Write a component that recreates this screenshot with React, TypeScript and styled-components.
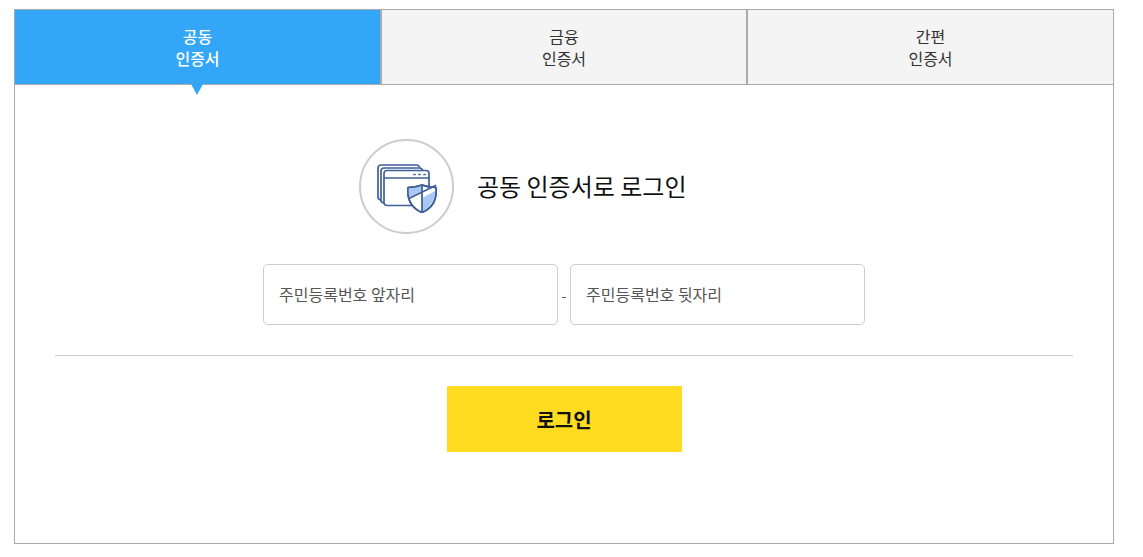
import React from "react";
import styled, { createGlobalStyle } from "styled-components";

const Global = createGlobalStyle`
  html, body { margin: 0; padding: 0; background: #fff; }
  body { font-family: "Noto Sans CJK KR", "Noto Sans", sans-serif; }
  * { box-sizing: border-box; }
`;

const Page = styled.div`
  padding: 9px 0 0 14px;
  width: 1143px;
  height: 557px;
`;

const Frame = styled.div`
  width: 1100px;
  height: 535px;
  border: 1px solid #aaa;
  display: flex;
  flex-direction: column;
`;

const Tabs = styled.div`
  display: grid;
  grid-template-columns: 367px 366px 365px;
  height: 75px;
  border-bottom: 1px solid #aaa;
`;

const Tab = styled.div<{ $active?: boolean; $last?: boolean }>`
  position: relative;
  display: flex;
  align-items: center;
  justify-content: center;
  text-align: center;
  font-size: 16px;
  line-height: 22px;
  font-weight: ${(p) => (p.$active ? 500 : 400)};
  color: ${(p) => (p.$active ? "#fff" : "#333")};
  background: ${(p) => (p.$active ? "#33a6f8" : "#f4f4f4")};
  border-right: ${(p) => (p.$last ? "0" : "2px solid #aaa")};
  ${(p) =>
    p.$active &&
    `&::after {
      content: "";
      position: absolute;
      left: 176px;
      top: 74px;
      border-left: 6px solid transparent;
      border-right: 6px solid transparent;
      border-top: 11px solid #33a6f8;
    }`}
`;

const Body = styled.div`
  padding: 54px 40px 0;
  display: flex;
  flex-direction: column;
  align-items: center;
`;

const Heading = styled.div`
  display: flex;
  align-items: center;
  gap: 23px;
  width: 410px;
  height: 95px;
`;

const IconCircle = styled.div`
  flex: none;
  width: 95px;
  height: 95px;
  border-radius: 50%;
  border: 2px solid #ccc;
  display: flex;
  align-items: center;
  justify-content: center;
  padding: 4px 0 0 2px;
`;

const Title = styled.h2`
  margin: 0;
  font-size: 24px;
  font-weight: 400;
  color: #111;
  position: relative;
  top: -1px;
`;

const Fields = styled.div`
  display: flex;
  align-items: center;
  margin-top: 30px;
`;

const Field = styled.div`
  width: 295px;
  height: 61px;
  border: 1px solid #ccc;
  border-radius: 5px;
  padding: 0 15px 1px;
  display: flex;
  align-items: center;
  font-size: 16px;
  color: #555;
`;

const Dash = styled.span`
  width: 12px;
  text-align: center;
  font-size: 14px;
  color: #555;
`;

const Divider = styled.div`
  width: 100%;
  margin-top: 30px;
  border-top: 1px solid #ccc;
`;

const Login = styled.button`
  margin-top: 30px;
  width: 235px;
  height: 66px;
  border: 0;
  background: #ffdc1f;
  color: #111;
  font-family: inherit;
  font-size: 20px;
  font-weight: 700;
`;

const CertIcon = () => (
  <svg width="62" height="49" viewBox="0 0 62 49" fill="none" stroke="#3f5f96" strokeWidth="1.7" strokeLinejoin="round" strokeLinecap="round">
    <path d="M3.500 36C1.500 35.500 1 34.500 1 33V4a3 3 0 0 1 3-3h36a3 3 0 0 1 2.500 2" />
    <path d="M6.500 39C4.500 38.500 4 37.500 4 36V7a3 3 0 0 1 3-3h36a3 3 0 0 1 2.500 2" />
    <rect x="7" y="6.500" width="45" height="35" rx="3" fill="#fff" />
    <path d="M7 14h45" />
    <path d="M37 10.500h1M42 10.500h1M47 10.500h1" />
    <path d="M45 21c4 1.500 9 2.500 14 2.500 1 11-2 20-14 25C33 43.500 30 34.500 31 23.500c5 0 10-1 14-2.500z" fill="#fff" />
    <path d="M45 21c-4 1.500-9 2.500-14 2.500-.2 4 0 7 .8 10.500L45 27z" fill="#a9c8f5" stroke="none" />
    <path d="M45 34l13.300-7c-.2 7-3.300 13-8.300 17.500l-5 4z" fill="#a9c8f5" stroke="none" />
    <path d="M45 21c4 1.500 9 2.500 14 2.500 1 11-2 20-14 25C33 43.500 30 34.500 31 23.500c5 0 10-1 14-2.500z" />
    <path d="M45 21v27.500M32 34.500l26.500-13" />
  </svg>
);

export default function App() {
  return (
    <Page>
      <Global />
      <Frame>
        <Tabs>
          <Tab $active>공동<br />인증서</Tab>
          <Tab>금융<br />인증서</Tab>
          <Tab $last>간편<br />인증서</Tab>
        </Tabs>
        <Body>
          <Heading>
            <IconCircle><CertIcon /></IconCircle>
            <Title>공동 인증서로 로그인</Title>
          </Heading>
          <Fields>
            <Field>주민등록번호 앞자리</Field>
            <Dash>-</Dash>
            <Field>주민등록번호 뒷자리</Field>
          </Fields>
          <Divider />
          <Login>로그인</Login>
        </Body>
      </Frame>
    </Page>
  );
}
